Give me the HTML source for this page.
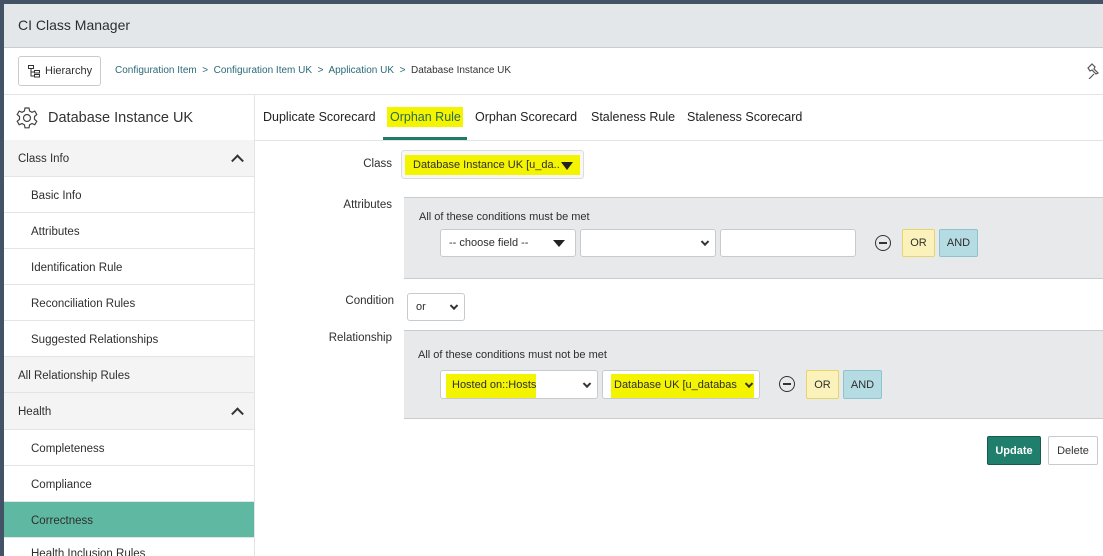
<!DOCTYPE html>
<html style="width:1103px;height:556px;overflow:hidden"><head><style>
*{box-sizing:border-box;margin:0;padding:0}
body{width:1103px;height:556px;overflow:hidden;background:#fff;font-family:"Liberation Sans",sans-serif;color:#2e2e2e;position:relative}
.a{position:absolute}
.row{position:absolute;left:4px;width:250px;border-bottom:1px solid #e2e4e6;font-size:11.5px;display:flex;align-items:center}
.g{background:#f4f4f4;padding-left:14px}
.w{background:#fff;padding-left:27px}
.chev{position:absolute;right:12px;top:50%;width:9px;height:9px;border-left:2px solid #333;border-top:2px solid #333;transform:translateY(-20%) rotate(45deg)}
.sel{position:absolute;background:#fff;border:1px solid #c8cbce;border-radius:3px;font-size:11px;display:flex;align-items:center;padding-left:8px}
.hl{background:#f4f400}
.dd{position:absolute;right:7px;top:50%;width:6px;height:6px;border-right:2px solid #333;border-bottom:2px solid #333;transform:translateY(-70%) rotate(45deg)}
.tri{position:absolute;right:10px;top:50%;margin-top:-3px;border-left:6px solid transparent;border-right:6px solid transparent;border-top:8px solid #222}
.btn{position:absolute;font-size:11px;display:flex;align-items:center;justify-content:center;border-radius:2px}
.or{background:#fbf2bb;border:1px solid #e7d56a}
.and{background:#b5dbe3;border:1px solid #8cc3cf}
.minus{position:absolute;width:16px;height:16px;border:1.5px solid #333;border-radius:50%}
.minus:after{content:"";position:absolute;left:3px;right:3px;top:6px;height:2px;background:#333}
.lbl{position:absolute;font-size:11.5px;text-align:right;width:100px}
.tab{position:absolute;top:110px;font-size:12.5px;color:#222}
</style></head><body>
<div class="a" style="left:0;top:0;width:1103px;height:4px;background:#445266"></div>
<div class="a" style="left:0;top:0;width:4px;height:556px;background:#445266"></div>
<div class="a" style="left:4px;top:4px;width:1099px;height:44px;background:#e4e7ea;border-bottom:1px solid #c9cbcd"></div>
<div class="a" style="left:18px;top:17px;font-size:14px;color:#2e2e2e">CI Class Manager</div>
<div class="a" style="left:4px;top:94px;width:1099px;height:1px;background:#e2e4e6"></div>
<div class="a" style="left:18px;top:56px;width:83px;height:30px;border:1px solid #c8cbce;border-radius:3px;font-size:11px;display:flex;align-items:center;padding-left:26px">Hierarchy</div>
<svg class="a" style="left:27px;top:64px" width="14" height="14" viewBox="0 0 14 14" fill="none" stroke="#333" stroke-width="1"><rect x="1.5" y="1.5" width="5" height="3"/><rect x="7.5" y="6.5" width="5" height="2.5"/><rect x="7.5" y="10.5" width="5" height="2.5"/><path d="M4 4.5V12H7.5M4 8H7.5"/></svg>
<div class="a" style="left:115px;top:65px;font-size:10px;color:#2a6a78">Configuration Item &nbsp;&gt;&nbsp; Configuration Item UK &nbsp;&gt;&nbsp; Application UK &nbsp;&gt;&nbsp; <span style="color:#333">Database Instance UK</span></div>
<svg class="a" style="left:1086px;top:62px" width="17" height="17" viewBox="0 0 17 17" fill="none" stroke="#555" stroke-width="1.2"><path d="M2 6l4-4 3 3-1 2 4 4-2 1-4-4-2 1z M8 12l-5 5"/></svg>

<div class="a" style="left:254px;top:95px;width:1px;height:461px;background:#e2e4e6"></div>
<svg class="a" style="left:15px;top:106px" width="24" height="24" viewBox="0 0 24 24" fill="none" stroke="#444" stroke-width="1.2"><circle cx="12" cy="12" r="3.5"/><path d="M10 2h4l.6 3 2.4 1.3 2.8-1.2 2 3.4-2.3 2v2.8l2.3 2-2 3.4-2.8-1.2-2.4 1.3-.6 3h-4l-.6-3-2.4-1.3-2.8 1.2-2-3.4 2.3-2v-2.8l-2.3-2 2-3.4 2.8 1.2 2.4-1.3z"/></svg>
<div class="a" style="left:48px;top:110px;font-size:14.5px;color:#333">Database Instance UK</div>
<div class="row g" style="top:140px;height:37px;padding-top:2px">Class Info<span class="chev"></span></div>
<div class="row w" style="top:177px;height:36px;padding-top:2px">Basic Info</div>
<div class="row w" style="top:213px;height:36px;padding-top:2px">Attributes</div>
<div class="row w" style="top:249px;height:36px;padding-top:2px">Identification Rule</div>
<div class="row w" style="top:285px;height:36px;padding-top:2px">Reconciliation Rules</div>
<div class="row w" style="top:321px;height:36px;padding-top:2px">Suggested Relationships</div>
<div class="row g" style="top:357px;height:36px;padding-top:2px">All Relationship Rules</div>
<div class="row g" style="top:393px;height:37px;padding-top:2px">Health<span class="chev"></span></div>
<div class="row w" style="top:430px;height:36px;padding-top:2px">Completeness</div>
<div class="row w" style="top:466px;height:36px;padding-top:2px">Compliance</div>
<div class="row w" style="top:502px;height:36px;padding-top:2px;background:#5fb9a2">Correctness</div>
<div class="row w" style="top:538px;height:18px;border:0;align-items:flex-start;padding-top:10px;overflow:hidden">Health Inclusion Rules</div>

<div class="a" style="left:255px;top:140px;width:848px;height:1px;background:#e2e4e6"></div>
<div class="tab" style="left:263px">Duplicate Scorecard</div>
<div class="a hl" style="left:387px;top:107px;width:76px;height:20px"></div>
<div class="tab" style="left:390px;color:#2a6a50">Orphan Rule</div>
<div class="tab" style="left:475px">Orphan Scorecard</div>
<div class="tab" style="left:591px">Staleness Rule</div>
<div class="tab" style="left:687px">Staleness Scorecard</div>
<div class="a" style="left:383px;top:137px;width:84px;height:3px;background:#1f7a68"></div>

<div class="lbl" style="left:292px;top:158px">Class</div>
<div class="lbl" style="left:292px;top:199px">Attributes</div>
<div class="lbl" style="left:294px;top:295px">Condition</div>
<div class="lbl" style="left:292px;top:332px">Relationship</div>

<div class="sel" style="left:401px;top:150px;width:183px;height:29px;background:#f7f7f7;border-color:#ddd;padding:0"><div class="hl" style="position:absolute;left:3px;top:4px;width:175px;height:20px"></div><span style="position:relative;left:11px">Database Instance UK [u_da..</span><span class="tri" style="right:10px"></span></div>

<div class="a" style="left:404px;top:197px;width:699px;height:82px;background:#e8e9eb;border-top:1px solid #c9cbcd;border-bottom:1px solid #c9cbcd"></div>
<div class="a" style="left:419px;top:211px;font-size:11px">All of these conditions must be met</div>
<div class="sel" style="left:440px;top:229px;width:136px;height:28px">-- choose field --<span class="tri" style="border-left-width:6px;border-right-width:6px;border-top-width:7px"></span></div>
<div class="sel" style="left:580px;top:229px;width:136px;height:28px"><span class="dd"></span></div>
<div class="sel" style="left:720px;top:229px;width:136px;height:28px"></div>
<div class="minus" style="left:875px;top:235px"></div>
<div class="btn or" style="left:902px;top:229px;width:33px;height:28px">OR</div>
<div class="btn and" style="left:939px;top:229px;width:39px;height:28px">AND</div>

<div class="sel" style="left:407px;top:293px;width:58px;height:28px">or<span class="dd"></span></div>

<div class="a" style="left:404px;top:330px;width:699px;height:89px;background:#e8e9eb;border-top:1px solid #c9cbcd;border-bottom:1px solid #c9cbcd"></div>
<div class="a" style="left:418px;top:349px;font-size:11px">All of these conditions must not be met</div>
<div class="sel" style="left:440px;top:370px;width:158px;height:29px;padding:0"><div class="hl" style="position:absolute;left:5px;top:3px;width:90px;height:24px"></div><span style="position:relative;left:11px">Hosted on::Hosts</span><span class="dd"></span></div>
<div class="sel" style="left:602px;top:370px;width:158px;height:29px;padding:0"><div class="hl" style="position:absolute;left:8px;top:3px;width:143px;height:24px"></div><span style="position:relative;left:11px">Database UK [u_databas</span><span class="dd"></span></div>
<div class="minus" style="left:779px;top:376px"></div>
<div class="btn or" style="left:806px;top:370px;width:33px;height:29px">OR</div>
<div class="btn and" style="left:843px;top:370px;width:39px;height:29px">AND</div>

<div class="btn" style="left:987px;top:436px;width:54px;height:29px;background:#1f7f6c;border:1px solid #155c4e;color:#fff;font-weight:bold">Update</div>
<div class="btn" style="left:1048px;top:436px;width:50px;height:29px;background:#fff;border:1px solid #c8cbce;color:#333">Delete</div>
</body></html>
